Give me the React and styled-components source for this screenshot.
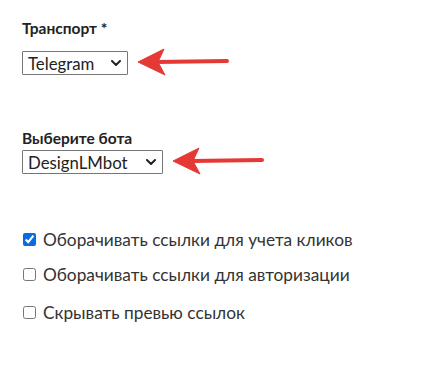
import React from "react";
import styled, { createGlobalStyle } from "styled-components";

const Global = createGlobalStyle`
  html, body { margin: 0; padding: 0; background: #fff; }
  body { font-family: Lato, "Open Sans", "Liberation Sans", sans-serif; color: #333; }
`;

const Page = styled.div`
  display: flex;
  flex-direction: column;
  padding: 18px 0 0 22px;
`;

const Label = styled.div`
  font-size: 15.5px;
  line-height: 20px;
  font-weight: 700;
  color: #222;
  margin-top: ${(p) => p.$top || 0}px;
  margin-bottom: ${(p) => p.$bottom || 0}px;
`;

const SelectRow = styled.div`
  display: flex;
  align-items: center;
  gap: 10px;
  height: 24px;
`;

const SelectWrap = styled.div`
  position: relative;
  width: ${(p) => p.$w}px;
  height: 24px;
`;

const NativeSelect = styled.select`
  appearance: none;
  -webkit-appearance: none;
  box-sizing: border-box;
  width: 100%;
  height: 100%;
  margin: 0;
  padding: 0 24px 0 5px;
  border: 1px solid #767676;
  border-radius: 1px;
  background: #fff;
  font-family: Lato, "Open Sans", "Liberation Sans", sans-serif;
  font-size: 16.8px;
  color: #222;
  outline: none;
`;

const Chevron = styled.svg`
  position: absolute;
  right: 7px;
  top: 9px;
  width: 10px;
  height: 6px;
  pointer-events: none;
`;

const ArrowSvg = styled.svg`
  flex: none;
  margin: -3px 0;
`;

const Options = styled.div`
  display: flex;
  flex-direction: column;
  margin-top: 55px;
`;

const CheckRow = styled.label`
  display: flex;
  align-items: center;
  gap: 7px;
  height: 20px;
  margin-bottom: ${(p) => p.$gap || 0}px;
  font-size: 17.3px;
  color: #333;
`;

const Box = styled.input`
  margin: 0 0 0 1px;
  width: 13px;
  height: 13px;
  accent-color: #0a6ce0;
`;

function Select({ value, width }) {
  return (
    <SelectWrap $w={width}>
      <NativeSelect defaultValue={value}>
        <option>{value}</option>
      </NativeSelect>
      <Chevron viewBox="0 0 10 6">
        <path d="M1 1 L5 5 L9 1" fill="none" stroke="#222" strokeWidth="2" strokeLinecap="round" strokeLinejoin="round" />
      </Chevron>
    </SelectWrap>
  );
}

function Arrow() {
  return (
    <ArrowSvg width="92" height="30" viewBox="0 0 92 30">
      <line x1="18" y1="14" x2="89" y2="13" stroke="#e53935" strokeWidth="4" strokeLinecap="round" />
      <path d="M0 14 L26 1 L20 14 L27 27 Z" fill="#e53935" stroke="#e53935" strokeWidth="1" strokeLinejoin="round" />
    </ArrowSvg>
  );
}

export default function App() {
  return (
    <>
      <Global />
      <Page>
        <Label $bottom={13}>Транспорт *</Label>
        <SelectRow>
          <Select value="Telegram" width={106} />
          <Arrow />
        </SelectRow>
        <Label $top={53} $bottom={2}>Выберите бота</Label>
        <SelectRow>
          <Select value="DesignLMbot" width={141} />
          <Arrow />
        </SelectRow>
        <Options>
          <CheckRow $gap={15}>
            <Box type="checkbox" defaultChecked />
            Оборачивать ссылки для учета кликов
          </CheckRow>
          <CheckRow $gap={18}>
            <Box type="checkbox" />
            Оборачивать ссылки для авторизации
          </CheckRow>
          <CheckRow>
            <Box type="checkbox" />
            Скрывать превью ссылок
          </CheckRow>
        </Options>
      </Page>
    </>
  );
}
